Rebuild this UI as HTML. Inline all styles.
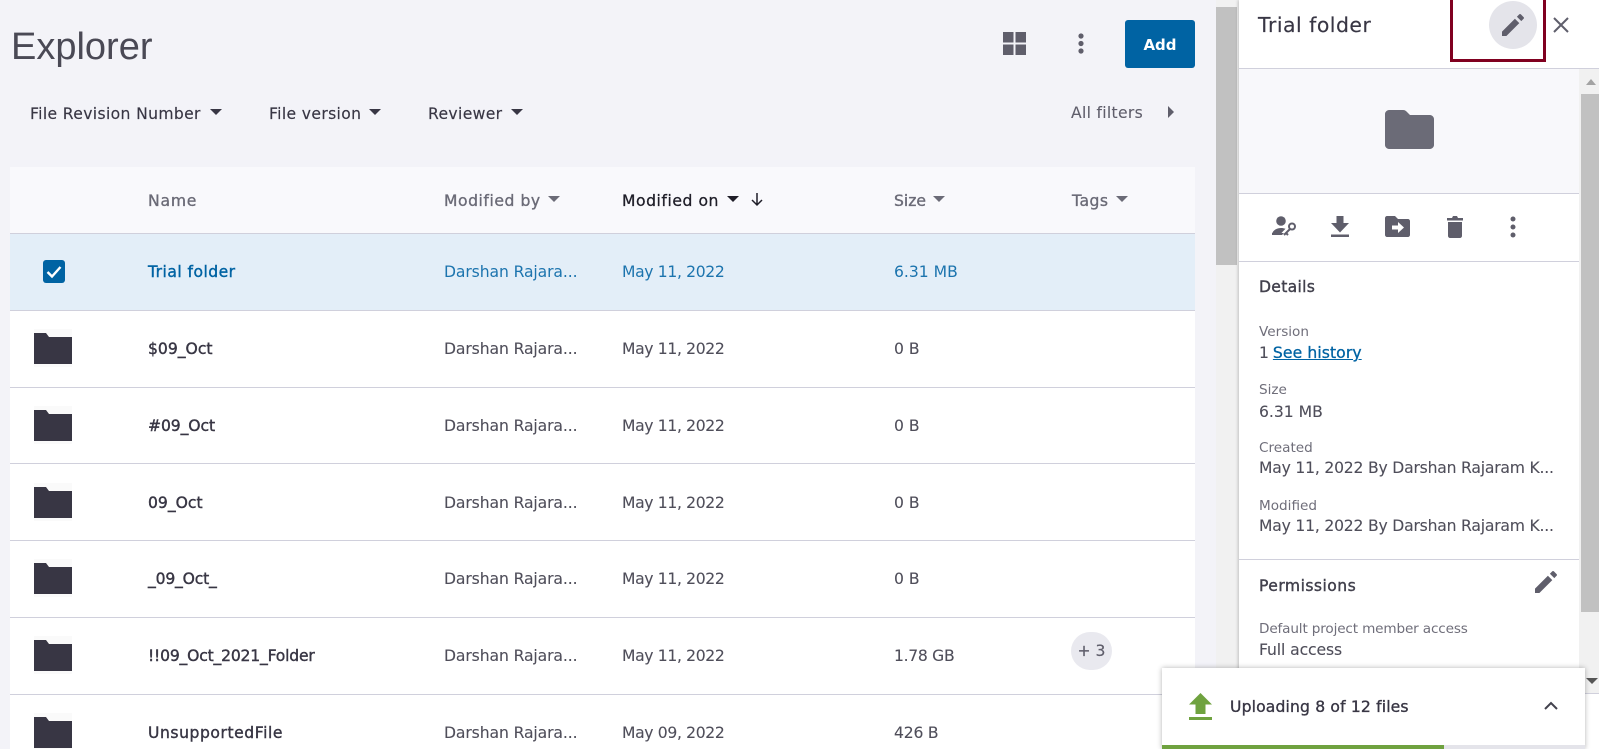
<!DOCTYPE html>
<html><head><meta charset="utf-8"><style>
html,body{margin:0;padding:0;width:1599px;height:749px;overflow:hidden;background:#f3f3f8}
body{position:relative;font-family:"DejaVu Sans","Liberation Sans",sans-serif;font-size:15.6px;color:#4a4955}
div,span,a,svg{position:absolute}
.t{white-space:nowrap;transform:translateY(-50%);line-height:20px}
.n{color:#383644;-webkit-text-stroke:.4px #383644}
.f{color:#383644;-webkit-text-stroke:.15px #383644;letter-spacing:.35px}
.g{color:#4f4e5a;-webkit-text-stroke:.1px #4f4e5a}
.d{letter-spacing:-.35px}
.h{color:#6b6b77;-webkit-text-stroke:.35px #6b6b77;letter-spacing:.55px}
.b{color:#1c74ae}
.l{position:absolute;height:1px;background:#d0d0dc}
.c{width:0;height:0;border-left:6.5px solid transparent;border-right:6.5px solid transparent;border-top:6.5px solid #6b6b77}
.lab{font-size:13.6px;color:#6f6e7a}
.v{color:#4f4e5a;-webkit-text-stroke:.1px #4f4e5a}
.bg{left:34px;width:38px;height:38px;background:#fafafa}
</style></head><body>

<div class="t" style="left:11px;top:47px;font-size:38px;line-height:46px;color:#4a4955;font-family:'Liberation Sans',sans-serif">Explorer</div>

<svg style="left:1003px;top:32px" width="23" height="23" viewBox="0 0 23 23" fill="#5f5e6b"><rect width="10.5" height="10.5"/><rect x="12.5" width="10.5" height="10.5"/><rect y="12.5" width="10.5" height="10.5"/><rect x="12.5" y="12.5" width="10.5" height="10.5"/></svg>
<svg style="left:1076px;top:32px" width="10" height="24" viewBox="0 0 10 24" fill="#5f5e6b"><circle cx="5" cy="4" r="2.6"/><circle cx="5" cy="11.5" r="2.6"/><circle cx="5" cy="19" r="2.6"/></svg>
<div style="left:1125px;top:20px;width:70px;height:48px;background:#0063a3;border-radius:3px"></div>
<div class="t" style="left:1125px;width:70px;top:45px;text-align:center;color:#fff;font-weight:bold;font-size:15px">Add</div>

<div class="t f" style="left:30px;top:114px">File Revision Number</div>
<div class="c" style="left:210px;top:109px;border-top-color:#383644"></div>
<div class="t f" style="left:269px;top:114px">File version</div>
<div class="c" style="left:369px;top:109px;border-top-color:#383644"></div>
<div class="t f" style="left:428px;top:114px">Reviewer</div>
<div class="c" style="left:511px;top:109px;border-top-color:#383644"></div>
<div class="t" style="left:1071px;top:113px;color:#5f5e6b;letter-spacing:.3px;-webkit-text-stroke:.1px #5f5e6b">All filters</div>
<div style="left:1168px;top:106px;width:0;height:0;border-top:6px solid transparent;border-bottom:6px solid transparent;border-left:6.5px solid #5f5e6b"></div>

<!-- table -->
<div style="left:10px;top:167px;width:1185px;height:582px;background:#fff"></div>
<div style="left:10px;top:167px;width:1185px;height:66px;background:#f9f9fc"></div>
<div style="left:10px;top:234px;width:1185px;height:76px;background:#e3eef8"></div>
<div class="l" style="left:10px;top:233px;width:1185px"></div>
<div class="l" style="left:10px;top:310px;width:1185px"></div>
<div class="l" style="left:10px;top:387px;width:1185px"></div>
<div class="l" style="left:10px;top:463px;width:1185px"></div>
<div class="l" style="left:10px;top:540px;width:1185px"></div>
<div class="l" style="left:10px;top:617px;width:1185px"></div>
<div class="l" style="left:10px;top:694px;width:1185px"></div>

<div class="t h" style="left:148px;top:201px;letter-spacing:.8px">Name</div>
<div class="t h" style="left:444px;top:201px">Modified by</div>
<div class="c" style="left:548px;top:196px"></div>
<div class="t" style="left:622px;top:201px;color:#1f1e28;-webkit-text-stroke:.3px #1f1e28;letter-spacing:.55px">Modified on</div>
<div class="c" style="left:727px;top:196px;border-top-color:#1f1e28"></div>
<svg style="left:749px;top:191px" width="16" height="16" viewBox="0 0 16 16" fill="none" stroke="#1f1e28" stroke-width="1.5"><path d="M8 2v12M3 9l5 5 5-5"/></svg>
<div class="t h" style="left:894px;top:201px;letter-spacing:0">Size</div>
<div class="c" style="left:933px;top:196px"></div>
<div class="t h" style="left:1072px;top:201px;letter-spacing:.5px">Tags</div>
<div class="c" style="left:1116px;top:196px"></div>

<!-- row 1 -->
<svg style="left:43px;top:260px" width="22" height="23" viewBox="0 0 22 23"><rect width="22" height="23" rx="3" fill="#0063a3"/><path d="M4.5 12l4.5 4.5 8.5-9.5" fill="none" stroke="#fff" stroke-width="2.4"/></svg>
<div class="t" style="left:148px;top:272px;color:#0063a3;-webkit-text-stroke:.4px #0063a3;letter-spacing:.45px">Trial folder</div>
<div class="t b" style="left:444px;top:272px;letter-spacing:-.1px">Darshan Rajara...</div>
<div class="t b d" style="left:622px;top:272px">May 11, 2022</div>
<div class="t b" style="left:894px;top:272px">6.31 MB</div>

<!-- rows -->
<div class="bg" style="top:329px"></div>
<svg style="left:34px;top:333px" width="38" height="31" viewBox="0 0 38 31" fill="#383644"><path d="M0 0h12l3 4h23v27H0z"/></svg>
<div class="t n" style="left:148px;top:349px">$09_Oct</div>
<div class="t g" style="left:444px;top:349px;letter-spacing:-.1px">Darshan Rajara...</div>
<div class="t g d" style="left:622px;top:349px">May 11, 2022</div>
<div class="t g" style="left:894px;top:349px">0 B</div>

<div class="bg" style="top:406px"></div>
<svg style="left:34px;top:410px" width="38" height="31" viewBox="0 0 38 31" fill="#383644"><path d="M0 0h12l3 4h23v27H0z"/></svg>
<div class="t n" style="left:148px;top:426px;letter-spacing:-.1px">#09_Oct</div>
<div class="t g" style="left:444px;top:426px;letter-spacing:-.1px">Darshan Rajara...</div>
<div class="t g d" style="left:622px;top:426px">May 11, 2022</div>
<div class="t g" style="left:894px;top:426px">0 B</div>

<div class="bg" style="top:483px"></div>
<svg style="left:34px;top:487px" width="38" height="31" viewBox="0 0 38 31" fill="#383644"><path d="M0 0h12l3 4h23v27H0z"/></svg>
<div class="t n" style="left:148px;top:503px">09_Oct</div>
<div class="t g" style="left:444px;top:503px;letter-spacing:-.1px">Darshan Rajara...</div>
<div class="t g d" style="left:622px;top:503px">May 11, 2022</div>
<div class="t g" style="left:894px;top:503px">0 B</div>

<div class="bg" style="top:559px"></div>
<svg style="left:34px;top:563px" width="38" height="31" viewBox="0 0 38 31" fill="#383644"><path d="M0 0h12l3 4h23v27H0z"/></svg>
<div class="t n" style="left:148px;top:579px;letter-spacing:-.2px">_09_Oct_</div>
<div class="t g" style="left:444px;top:579px;letter-spacing:-.1px">Darshan Rajara...</div>
<div class="t g d" style="left:622px;top:579px">May 11, 2022</div>
<div class="t g" style="left:894px;top:579px">0 B</div>

<div class="bg" style="top:636px"></div>
<svg style="left:34px;top:640px" width="38" height="31" viewBox="0 0 38 31" fill="#383644"><path d="M0 0h12l3 4h23v27H0z"/></svg>
<div class="t n" style="left:148px;top:656px;letter-spacing:-.2px">!!09_Oct_2021_Folder</div>
<div class="t g" style="left:444px;top:656px;letter-spacing:-.1px">Darshan Rajara...</div>
<div class="t g d" style="left:622px;top:656px">May 11, 2022</div>
<div class="t g" style="left:894px;top:656px;letter-spacing:-.3px">1.78 GB</div>
<div style="left:1071px;top:632px;width:41px;height:38px;border-radius:20px;background:#e9e9ef"></div>
<div class="t" style="left:1071px;width:41px;top:651px;text-align:center;color:#5f5e6b;-webkit-text-stroke:.2px #5f5e6b">+ 3</div>

<div class="bg" style="top:713px"></div>
<svg style="left:34px;top:717px" width="38" height="31" viewBox="0 0 38 31" fill="#383644"><path d="M0 0h12l3 4h23v27H0z"/></svg>
<div class="t n" style="left:148px;top:733px;letter-spacing:.55px">UnsupportedFile</div>
<div class="t g" style="left:444px;top:733px;letter-spacing:-.1px">Darshan Rajara...</div>
<div class="t g d" style="left:622px;top:733px">May 09, 2022</div>
<div class="t g" style="left:894px;top:733px;letter-spacing:-.2px">426 B</div>

<!-- main scrollbar -->
<div style="left:1216px;top:0;width:23px;height:749px;background:#f1f1f1"></div>
<div style="left:1216px;top:7px;width:21px;height:258px;background:#c1c1c1"></div>

<!-- right panel -->
<div style="left:1239px;top:0;width:360px;height:749px;background:#fff;box-shadow:-1px 0 3px rgba(0,0,0,.2)"></div>
<div class="t" style="left:1258px;top:25px;font-size:20.4px;line-height:28px;color:#383644;letter-spacing:.5px;-webkit-text-stroke:.15px #383644">Trial folder</div>
<div style="left:1450px;top:-4px;width:90px;height:60px;border:3px solid #800020"></div>
<div style="left:1489px;top:1px;width:48px;height:48px;border-radius:50%;background:#e4e4ea"></div>
<svg style="left:1501px;top:13px" width="24" height="24" viewBox="0 0 24 24" fill="#5f5e6b"><path d="M1 18.6V23h4.4L18.3 10.1l-4.4-4.4zM22.600 5.800c.5-.5.5-1.200 0-1.700L19.900 1.400c-.5-.5-1.200-.5-1.700 0l-2.300 2.300 4.400 4.400z"/></svg>
<svg style="left:1552px;top:16px" width="18" height="18" viewBox="0 0 18 18" fill="none" stroke="#5f5e6b" stroke-width="2"><path d="M2 2l14 14M16 2L2 16"/></svg>

<div class="l" style="left:1239px;top:68px;width:360px"></div>
<div style="left:1239px;top:69px;width:340px;height:124px;background:#f8f8fb"></div>
<div class="l" style="left:1239px;top:193px;width:340px"></div>
<svg style="left:1385px;top:110px" width="49" height="39" viewBox="0 0 49 39" fill="#6b6b77"><path d="M4 0h14c2 0 3 1 4 2l3 3h20c2 0 4 2 4 4v26c0 2-2 4-4 4H4c-2 0-4-2-4-4V4c0-2 2-4 4-4z"/></svg>

<!-- panel scrollbar -->
<div style="left:1579px;top:69px;width:20px;height:625px;background:#f1f1f1"></div>
<div style="left:1581px;top:94px;width:18px;height:518px;background:#c1c1c1"></div>
<div style="left:1586px;top:79px;width:0;height:0;border-left:5.5px solid transparent;border-right:5.5px solid transparent;border-bottom:6px solid #a3a3a3"></div>
<div style="left:1586px;top:678px;width:0;height:0;border-left:6px solid transparent;border-right:6px solid transparent;border-top:6px solid #555"></div>
<div class="l" style="left:1585px;top:693px;width:14px;background:#d0d0dc"></div>

<!-- action icons -->
<svg style="left:1271px;top:216px" width="26" height="22" viewBox="0 0 26 22" fill="#5f5e6b"><circle cx="10" cy="5" r="4.800"/><path d="M1 18c1-4 5-6 9-6 2 0 3 .3 4.500.8L9 18.500v.500z"/><path d="M1 17h12l-2 2H1z"/><circle cx="21" cy="10.500" r="3" fill="none" stroke="#5f5e6b" stroke-width="2"/><path d="M19 13l-6 6M15 17l2 2" fill="none" stroke="#5f5e6b" stroke-width="2"/></svg>
<svg style="left:1331px;top:216px" width="18" height="21" viewBox="0 0 18 21" fill="#5f5e6b"><path d="M5.500 0h7v7H18l-9 9.500L0 7h5.500zM0 18.500h18V21H0z"/></svg>
<svg style="left:1385px;top:216px" width="25" height="21" viewBox="0 0 25 21" fill="#5f5e6b"><path d="M2 0h8l3 3h10c1 0 2 1 2 2v14c0 1-1 2-2 2H2c-1 0-2-1-2-2V2c0-1 1-2 2-2z"/><path d="M7 9.500h6V6l6 5.500-6 5.500v-3.500H7z" fill="#fff"/></svg>
<svg style="left:1446px;top:215px" width="18" height="23" viewBox="0 0 18 23" fill="#5f5e6b"><path d="M1 3h5l1-2h4l1 2h5v2.500H1zM2 7h14v14c0 1-1 2-2 2H4c-1 0-2-1-2-2z"/></svg>
<svg style="left:1508px;top:215px" width="10" height="24" viewBox="0 0 10 24" fill="#5f5e6b"><circle cx="5" cy="4" r="2.500"/><circle cx="5" cy="12" r="2.500"/><circle cx="5" cy="20" r="2.500"/></svg>
<div class="l" style="left:1239px;top:261px;width:340px"></div>

<div class="t" style="left:1259px;top:287px;color:#42414d;-webkit-text-stroke:.4px #42414d;letter-spacing:.3px">Details</div>
<div class="t lab" style="left:1259px;top:332px">Version</div>
<div class="t v" style="left:1259px;top:353px">1 <span style="position:static;color:#0063a3;text-decoration:underline;-webkit-text-stroke:.3px #0063a3;letter-spacing:.1px;margin-left:-1px">See history</span></div>
<div class="t lab" style="left:1259px;top:390px">Size</div>
<div class="t v" style="left:1259px;top:412px">6.31 MB</div>
<div class="t lab" style="left:1259px;top:448px">Created</div>
<div class="t v" style="left:1259px;top:468px;letter-spacing:-.2px">May 11, 2022 By Darshan Rajaram K...</div>
<div class="t lab" style="left:1259px;top:506px">Modified</div>
<div class="t v" style="left:1259px;top:526px;letter-spacing:-.2px">May 11, 2022 By Darshan Rajaram K...</div>
<div class="l" style="left:1239px;top:559px;width:340px"></div>
<div class="t" style="left:1259px;top:586px;color:#42414d;-webkit-text-stroke:.4px #42414d;letter-spacing:.45px">Permissions</div>
<svg style="left:1534px;top:570px" width="24" height="24" viewBox="0 0 24 24" fill="#5f5e6b"><path d="M1 18.600V23h4.400L18.300 10.100l-4.400-4.400zM22.600 5.800c.5-.5.5-1.200 0-1.700L19.900 1.400c-.5-.5-1.200-.5-1.700 0l-2.300 2.300 4.400 4.400z"/></svg>
<div class="t lab" style="left:1259px;top:629px;letter-spacing:-.15px">Default project member access</div>
<div class="t v" style="left:1259px;top:650px;letter-spacing:-.1px">Full access</div>

<!-- upload -->
<div style="left:1162px;top:668px;width:423px;height:81px;background:#fff;box-shadow:0 0 5px rgba(0,0,0,.3)"></div>
<svg style="left:1189px;top:693px" width="23" height="27" viewBox="0 0 23 27" fill="#6fa23f"><path d="M11.500 0L23 11.500h-6.500V21h-10v-9.500H0zM0 24h23v3H0z"/></svg>
<div class="t" style="left:1230px;top:707px;color:#383644;-webkit-text-stroke:.35px #383644;letter-spacing:.15px">Uploading 8 of 12 files</div>
<svg style="left:1543px;top:699px" width="16" height="12" viewBox="0 0 16 12" fill="none" stroke="#42414d" stroke-width="2"><path d="M2 10l6-6 6 6"/></svg>
<div style="left:1162px;top:745px;width:423px;height:4px;background:#e4e4ea"></div>
<div style="left:1162px;top:745px;width:282px;height:4px;background:#6fa23f"></div>

</body></html>
